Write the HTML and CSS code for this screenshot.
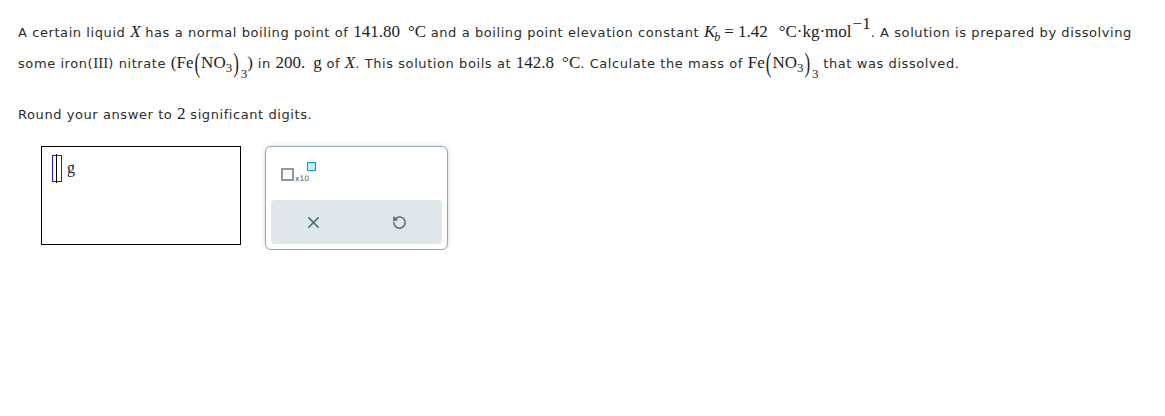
FILE: index.html
```html
<!DOCTYPE html>
<html>
<head>
<meta charset="utf-8">
<link rel="stylesheet" href="styles.css">
</head>
<body>
<div class="page">
  <p class="q">A certain liquid <span class="m"><i>X</i></span> has a normal boiling point of <span class="m">141.80<span class="sp1"></span>°C</span> and a boiling point elevation constant <span class="m"><i>K</i><sub class="sb"><i>b</i></sub><span class="eq">=</span>1.42<span class="sp2"></span>°C·kg·mol<sup class="sp">−1</sup></span>. A solution is prepared by dissolving<br>some iron(<span class="rn">III</span>) nitrate <span class="m">(Fe<span class="bp">(</span>NO<sub class="s3">3</sub><span class="bp">)</span><sub class="s3o">3</sub>)</span> in <span class="m">200.<span class="sp1"></span>g</span> of <span class="m"><i>X</i></span>. This solution boils at <span class="m">142.8<span class="sp1"></span>°C</span>. Calculate the mass of <span class="m">Fe<span class="bp">(</span>NO<sub class="s3">3</sub><span class="bp">)</span><sub class="s3o">3</sub></span> that was dissolved.</p>
  <p class="r">Round your answer to <span class="m">2</span> significant digits.</p>
  <div class="answer">
    <div class="abox">
      <span class="cursor"></span><span class="unit">g</span>
    </div>
    <div class="panel">
      <div class="tools">
        <span class="sq"></span><span class="x10">x10</span><span class="sup-sq"></span>
      </div>
      <div class="actions">
        <button class="btn" aria-label="clear">
          <svg width="13" height="13" viewBox="0 0 14 14"><path d="M1.5 1.5 L12.5 12.5 M12.5 1.5 L1.5 12.5" stroke="#4f6d7a" stroke-width="1.6" fill="none"/></svg>
        </button>
        <button class="btn" aria-label="undo">
          <svg width="15" height="15" viewBox="0 0 24 24"><path d="M3 12a9 9 0 1 0 9-9 9.75 9.75 0 0 0-6.74 2.74L3 8" stroke="#4f6d7a" stroke-width="2.4" fill="none" stroke-linecap="round" stroke-linejoin="round"/><path d="M3 3v5h5" stroke="#4f6d7a" stroke-width="2.4" fill="none" stroke-linecap="round" stroke-linejoin="round"/></svg>
        </button>
      </div>
    </div>
  </div>
</div>
</body>
</html>
```
FILE: styles.css
```css
html, body { margin: 0; padding: 0; background: #fff; }
.page {
  padding: 17px 18px 0 18px;
  font-family: "DejaVu Sans", Verdana, sans-serif;
  font-size: 13px;
  letter-spacing: 0.58px;
  color: #2b2b2b;
}
.q { margin: 0; line-height: 30px; white-space: nowrap; }
.r { margin: 20px 0 0 0; line-height: 30px; }
.m { font-family: "Liberation Serif", "Times New Roman", serif; font-size: 17px; color: #222; letter-spacing: 0; }
.m i { font-style: italic; }
.rn { font-family: "Liberation Serif", serif; font-size: 15px; letter-spacing: 0; }
.sp1 { display: inline-block; width: 8px; }
.sp2 { display: inline-block; width: 11px; }
.eq { margin: 0 4px; }
.sb { font-size: 12px; vertical-align: -4px; line-height: 0; margin-left: -1px; }
.sp { font-size: 17px; vertical-align: 8px; line-height: 0; margin-left: 1px; }
.bp { display: inline-block; transform: translateY(1px) scale(1, 1.65); transform-origin: 50% 60%; line-height: 0; margin: 0 1px; }
.s3 { font-size: 13px; vertical-align: -4px; line-height: 0; }
.s3o { font-size: 13px; vertical-align: -10px; line-height: 0; margin-left: 1px; }
.answer { display: flex; align-items: flex-start; gap: 24px; margin: 16px 0 0 23px; letter-spacing: 0; }
.abox {
  width: 198px; height: 97px; border: 1px solid #000;
  display: flex; align-items: flex-start; padding: 0; box-sizing: content-box;
}
.cursor {
  display: inline-block; width: 8px; height: 25px; border: 1px solid #1a1aff;
  margin: 8px 0 0 10px; position: relative;
}
.cursor::after { content: ""; position: absolute; left: 3px; top: -2px; width: 1px; height: 29px; background: #000; }
.unit { font-family: "Liberation Serif", serif; font-size: 16px; color: #222; margin: 12px 0 0 5px; }
.panel {
  width: 171px; height: 97px; border: 1px solid #94a7b0; border-radius: 6px;
  box-shadow: 0 0 4px rgba(120,140,150,0.35); background: #fff;
  display: flex; flex-direction: column; padding: 0 5px 5px 5px; box-sizing: content-box;
}
.tools { height: 53px; display: flex; align-items: flex-start; flex: none; }
.sq { width: 9px; height: 9px; border: 2px solid #8a9aa2; margin: 21px 0 0 10px; }
.x10 { font-family: "DejaVu Sans", sans-serif; font-size: 7.5px; color: #4a5a62; margin: 27px 0 0 1px; }
.sup-sq { width: 7px; height: 7px; border: 1.5px solid #1c98ad; background: #c6eef3; margin: 15px 0 0 -2px; }
.actions {
  flex: 1; background: #e0e7ea; border-radius: 4px;
  display: flex; align-items: center; justify-content: space-around;
}
.btn { background: none; border: 0; padding: 0; width: 40px; height: 30px; display: flex; align-items: center; justify-content: center; }
```
